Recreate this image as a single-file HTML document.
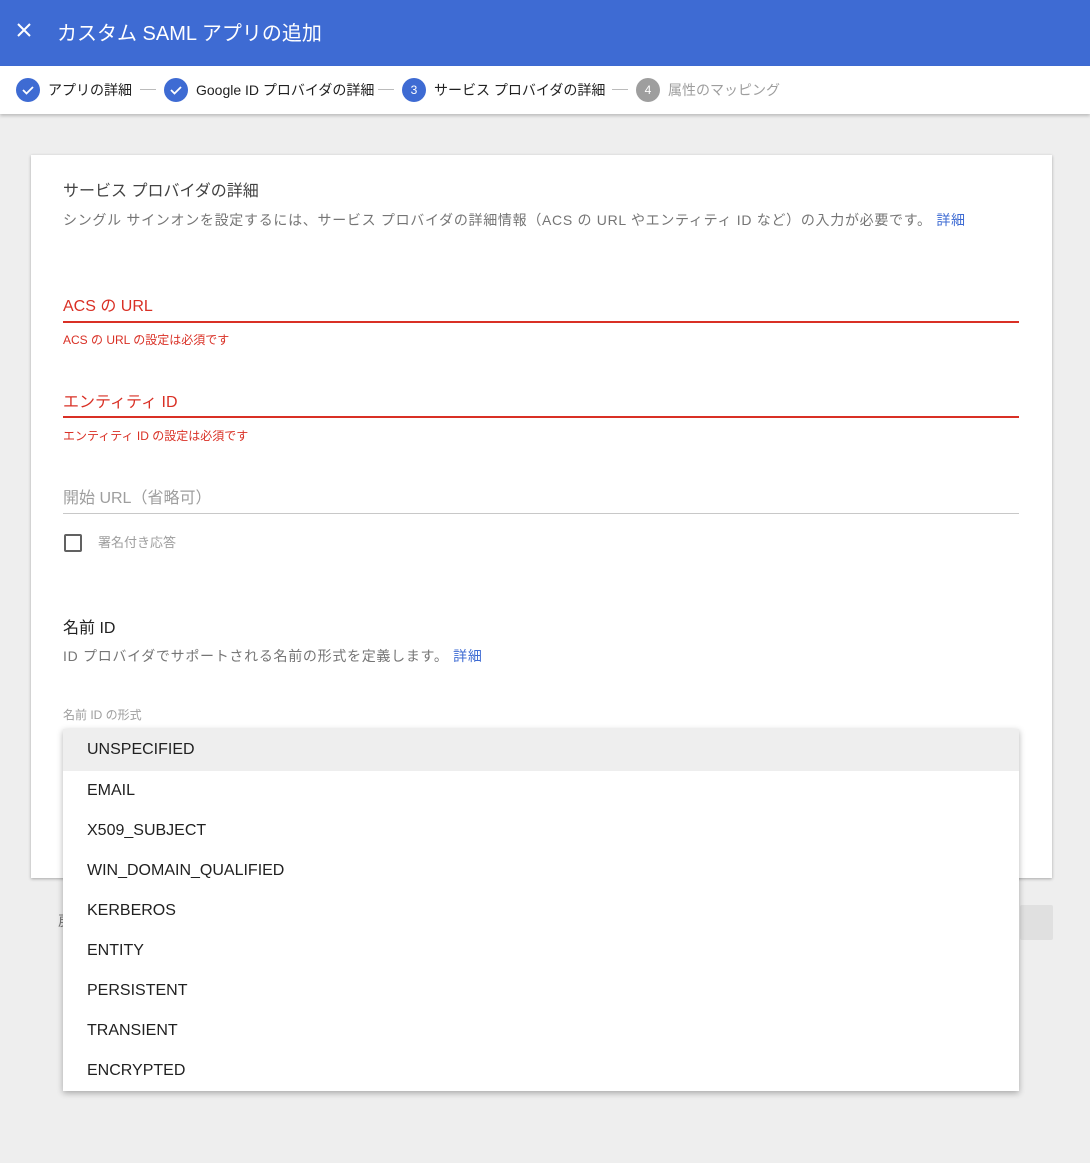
<!DOCTYPE html>
<html><head><meta charset="utf-8">
<style>
*{box-sizing:border-box;margin:0;padding:0}
body{width:1090px;height:1163px;background:#eeeeee;font-family:"Liberation Sans","Noto Sans CJK JP",sans-serif;position:relative;overflow:hidden;color:#212121}
.hdr{position:absolute;left:0;top:0;width:1090px;height:66px;background:#3e6bd3;color:#fff}
.hdr .t{position:absolute;left:57px;top:17px;font-size:20px}
.steps{position:absolute;left:0;top:66px;width:1090px;height:48px;background:#fff;box-shadow:0 2px 3px rgba(0,0,0,.2)}
.st{position:absolute;top:12px;display:flex;align-items:center;font-size:14px;color:#212121}
.c{width:24px;height:24px;border-radius:50%;background:#3e6bd3;color:#fff;display:flex;align-items:center;justify-content:center;font-size:12px;margin-right:8px}
.dash{position:absolute;top:23px;width:16px;height:1px;background:#bbb}
.card{position:absolute;left:31px;top:155px;width:1021px;height:723px;background:#fff;box-shadow:0 1px 3px rgba(0,0,0,.3)}
.abs{position:absolute}
.red{color:#d93025}
.menu{position:absolute;left:63px;top:729px;width:956px;height:362px;background:#fff;box-shadow:0 2px 6px rgba(0,0,0,.3)}
.mi{height:40px;line-height:40px;padding-left:24px;font-size:16px;color:#212121}
</style></head><body>
<div class="hdr">
<svg class="abs" style="left:16px;top:22px" width="16" height="16" viewBox="0 0 16 16"><path d="M2 2L14 14M14 2L2 14" stroke="#fff" stroke-width="2"/></svg>
<div class="t">カスタム SAML アプリの追加</div>
</div>
<div class="steps">
<div class="st" style="left:16px"><div class="c"><svg width="14" height="14" viewBox="0 0 14 14"><path d="M2 7l3.5 3.5L12 4" stroke="#fff" stroke-width="1.8" fill="none"/></svg></div>アプリの詳細</div>
<div class="dash" style="left:140px"></div>
<div class="st" style="left:164px"><div class="c"><svg width="14" height="14" viewBox="0 0 14 14"><path d="M2 7l3.5 3.5L12 4" stroke="#fff" stroke-width="1.8" fill="none"/></svg></div>Google ID プロバイダの詳細</div>
<div class="dash" style="left:378px"></div>
<div class="st" style="left:402px"><div class="c">3</div>サービス プロバイダの詳細</div>
<div class="dash" style="left:612px"></div>
<div class="st" style="left:636px;color:#9e9e9e"><div class="c" style="background:#9e9e9e">4</div>属性のマッピング</div>
</div>
<div class="abs" style="left:58px;top:911px;font-size:14px;color:#757575">戻</div>
<div class="abs" style="left:1020px;top:905px;width:33px;height:35px;background:#e0e0e0;border-radius:2px"></div>
<div class="card"></div>
<div class="abs" style="left:63px;top:177px;font-size:16px;color:#424242">サービス プロバイダの詳細</div>
<div class="abs" style="left:63px;top:210px;font-size:14px;color:#757575;letter-spacing:0.7px;white-space:nowrap">シングル サインオンを設定するには、サービス プロバイダの詳細情報（ACS の URL やエンティティ ID など）の入力が必要です。 <span style="color:#3e6bd3">詳細</span></div>
<div class="abs red" style="left:63px;top:292px;font-size:16px">ACS の URL</div>
<div class="abs" style="left:63px;top:321px;width:956px;height:2px;background:#d93025"></div>
<div class="abs red" style="left:63px;top:331px;font-size:12px">ACS の URL の設定は必須です</div>
<div class="abs red" style="left:63px;top:388px;font-size:16px">エンティティ ID</div>
<div class="abs" style="left:63px;top:416px;width:956px;height:2px;background:#d93025"></div>
<div class="abs red" style="left:63px;top:427px;font-size:12px">エンティティ ID の設定は必須です</div>
<div class="abs" style="left:63px;top:484px;font-size:16px;color:#9e9e9e">開始 URL（省略可）</div>
<div class="abs" style="left:63px;top:513px;width:956px;height:1px;background:#c8c8c8"></div>
<div class="abs" style="left:64px;top:534px;width:18px;height:18px;border:2px solid #616161;border-radius:2px"></div>
<div class="abs" style="left:98px;top:532px;font-size:13px;color:#9e9e9e">署名付き応答</div>
<div class="abs" style="left:63px;top:614px;font-size:16px;color:#212121">名前 ID</div>
<div class="abs" style="left:63px;top:646px;font-size:14px;color:#757575;letter-spacing:0.7px;white-space:nowrap">ID プロバイダでサポートされる名前の形式を定義します。 <span style="color:#3e6bd3">詳細</span></div>
<div class="abs" style="left:63px;top:706px;font-size:12px;color:#9e9e9e">名前 ID の形式</div>
<div class="menu">
<div class="mi" style="background:#eeeeee;height:42px;line-height:42px">UNSPECIFIED</div>
<div class="mi">EMAIL</div>
<div class="mi">X509_SUBJECT</div>
<div class="mi">WIN_DOMAIN_QUALIFIED</div>
<div class="mi">KERBEROS</div>
<div class="mi">ENTITY</div>
<div class="mi">PERSISTENT</div>
<div class="mi">TRANSIENT</div>
<div class="mi">ENCRYPTED</div>
</div>
</body></html>
